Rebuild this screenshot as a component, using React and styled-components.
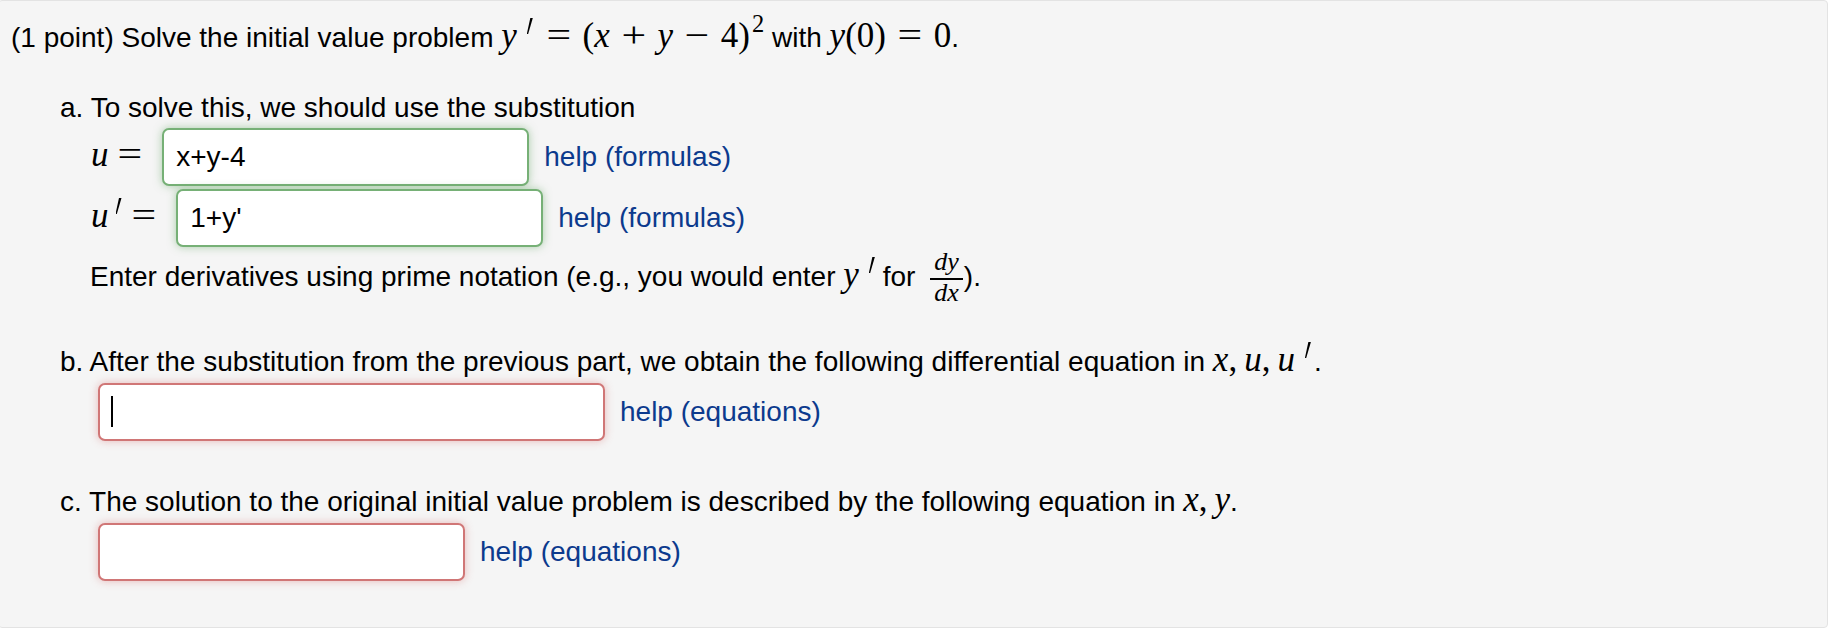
import React from "react";
import styled, { createGlobalStyle } from "styled-components";

const GlobalStyle = createGlobalStyle`
  html, body {
    margin: 0;
    padding: 0;
    background: #ffffff;
  }
  body {
    font-family: "Liberation Sans", Arial, sans-serif;
    color: #000;
  }
`;

const Well = styled.div`
  box-sizing: border-box;
  width: 1830px;
  height: 628px;
  margin-left: -2px;
  padding: 17px 0 0 12px;
  background: #f5f5f5;
  border: 1px solid #e3e3e3;
  border-radius: 4px;
  font-size: 28px;
  line-height: 40px;
  overflow: hidden;
`;

const Statement = styled.div`
  white-space: nowrap;
`;

const Part = styled.div`
  margin-top: ${(p) => p.$top}px;
  padding-left: 49px;
`;

const PartLine = styled.div`
  white-space: nowrap;
`;

const Indented = styled.div`
  margin-top: ${(p) => p.$top || 0}px;
  padding-left: ${(p) => p.$indent}px;
  white-space: nowrap;
`;

const AnswerRow = styled.div`
  display: flex;
  align-items: center;
  height: 58px;
  margin-top: ${(p) => p.$top || 0}px;
  padding-left: ${(p) => p.$indent}px;
`;

const Label = styled.span`
  margin-right: 23px;
  white-space: nowrap;
`;

const FieldWrap = styled.span`
  position: relative;
  display: inline-flex;
`;

const AnswerInput = styled.input`
  box-sizing: border-box;
  width: ${(p) => p.$width}px;
  height: 58px;
  padding: 0 12px;
  font-family: "Liberation Sans", Arial, sans-serif;
  font-size: 28px;
  color: #000;
  background: #ffffff;
  border: 2px solid
    ${(p) => (p.$status === "correct" ? "#76b076" : "#d07676")};
  border-radius: 7px;
  box-shadow: 0 0 9px
    ${(p) =>
      p.$status === "correct"
        ? "rgba(96, 164, 96, 0.5)"
        : "rgba(214, 110, 110, 0.45)"};
  outline: none;
`;

const Caret = styled.span`
  position: absolute;
  left: 13px;
  top: 13px;
  width: 2px;
  height: 31px;
  background: #000;
`;

const HelpLink = styled.a`
  margin-left: 15px;
  color: #0c3a8d;
  text-decoration: none;
  white-space: nowrap;
`;

const MathText = styled.span`
  font-family: "Liberation Serif", "Times New Roman", serif;
  font-size: 35px;
  line-height: 1;
  white-space: nowrap;
`;

const V = styled.i`
  font-style: italic;
`;

const Op = styled.span`
  display: inline-block;
  margin-left: ${(p) => p.$l ?? 14}px;
  margin-right: ${(p) => p.$r ?? 14}px;
  transform: scaleX(1.25);
`;

const Comma = styled.span`
  margin-right: 7px;
`;

/* the prime is drawn as a tapered slanted stroke, like the TeX glyph */
const Prime = styled.span`
  display: inline-block;
  width: 6px;
  height: 16px;
  margin-left: ${(p) => p.$l ?? 10}px;
  margin-right: ${(p) => p.$r ?? 2}px;
  vertical-align: 13px;
  background: #000;
  clip-path: polygon(58% 0, 100% 0, 22% 100%, 0 100%);
`;

const Sup = styled.sup`
  font-size: 0.7em;
  vertical-align: 0.6em;
  line-height: 0;
  margin-left: 2px;
`;

const Frac = styled.span`
  display: inline-flex;
  flex-direction: column;
  align-items: center;
  vertical-align: 16px;
  margin: -10px 1px -10px 15px;
  font-family: "Liberation Serif", "Times New Roman", serif;
  font-style: italic;
  font-size: 26px;
  line-height: 1;
`;

const FracPart = styled.span`
  padding: ${(p) => (p.$den ? "0 4px" : "0 4px 3px")};
`;

const FracBar = styled.span`
  align-self: stretch;
  height: 1.5px;
  background: #000;
`;

export default function App() {
  return (
    <>
      <GlobalStyle />
      <Well>
        <Statement>
          (1 point) Solve the initial value problem{" "}
          <MathText>
            <V>y</V>
            <Prime />
            <Op>=</Op>(<V>x</V>
            <Op>+</Op>
            <V>y</V>
            <Op>−</Op>4)<Sup>2</Sup>
          </MathText>{" "}
          with{" "}
          <MathText>
            <V>y</V>(0)<Op>=</Op>0
          </MathText>
          .
        </Statement>

        <Part $top={30}>
          <PartLine>a. To solve this, we should use the substitution</PartLine>
          <AnswerRow $top={0} $indent={31}>
            <Label>
              <MathText>
                <V>u</V>
                <Op $l={11} $r={0}>
                  =
                </Op>
              </MathText>
            </Label>
            <AnswerInput
              readOnly
              $width={367}
              $status="correct"
              defaultValue="x+y-4"
            />
            <HelpLink href="#">help (formulas)</HelpLink>
          </AnswerRow>
          <AnswerRow $top={3} $indent={31}>
            <Label>
              <MathText>
                <V>u</V>
                <Prime $l={7} />
                <Op $l={10} $r={0}>
                  =
                </Op>
              </MathText>
            </Label>
            <AnswerInput
              readOnly
              $width={367}
              $status="correct"
              defaultValue="1+y'"
            />
            <HelpLink href="#">help (formulas)</HelpLink>
          </AnswerRow>
          <Indented $top={10} $indent={30}>
            Enter derivatives using prime notation (e.g., you would enter{" "}
            <MathText>
              <V>y</V>
              <Prime $r={0} />
            </MathText>{" "}
            for
            <Frac>
              <FracPart>dy</FracPart>
              <FracBar />
              <FracPart $den>dx</FracPart>
            </Frac>
            ).
          </Indented>
        </Part>

        <Part $top={45}>
          <PartLine>
            b. After the substitution from the previous part, we obtain the
            following differential equation in{" "}
            <MathText>
              <V>x</V>
              <Comma>,</Comma>
              <V>u</V>
              <Comma>,</Comma>
              <V>u</V>
              <Prime $r={3} />
            </MathText>
            .
          </PartLine>
          <AnswerRow $top={1} $indent={38}>
            <FieldWrap>
              <AnswerInput readOnly $width={507} $status="incorrect" />
              <Caret />
            </FieldWrap>
            <HelpLink href="#">help (equations)</HelpLink>
          </AnswerRow>
        </Part>

        <Part $top={41}>
          <PartLine>
            c. The solution to the original initial value problem is described
            by the following equation in{" "}
            <MathText>
              <V>x</V>
              <Comma>,</Comma>
              <V>y</V>
            </MathText>
            .
          </PartLine>
          <AnswerRow $top={1} $indent={38}>
            <AnswerInput readOnly $width={367} $status="incorrect" />
            <HelpLink href="#">help (equations)</HelpLink>
          </AnswerRow>
        </Part>
      </Well>
    </>
  );
}
